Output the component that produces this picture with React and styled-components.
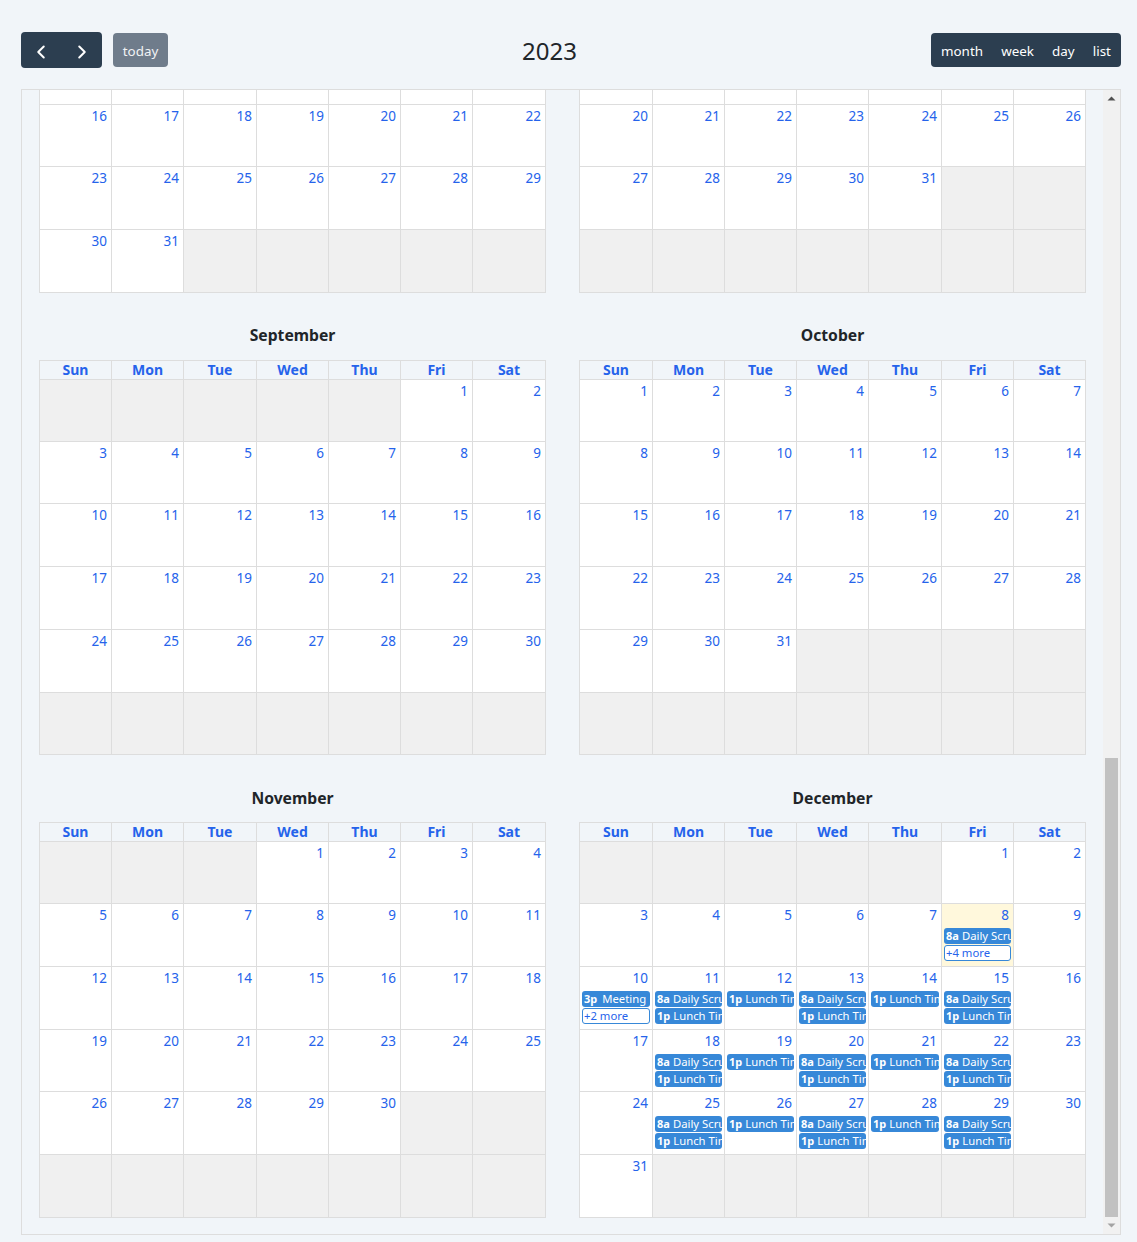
import React from "react";
import styled, { createGlobalStyle } from "styled-components";
import { ChevronLeft, ChevronRight } from "lucide-react";

const Global = createGlobalStyle`
  html, body { margin: 0; padding: 0; background: #f1f5f9; }
  body { font-family: "Noto Sans", "Open Sans", sans-serif; font-size: 14px; color: #212529; }
`;

const Page = styled.div`
  width: 1137px;
  height: 1242px;
  box-sizing: border-box;
  padding: 32px 16px 7px 21px;
  display: flex;
  flex-direction: column;
  overflow: hidden;
`;
const Toolbar = styled.div`
  display: flex;
  justify-content: space-between;
  align-items: center;
  height: 36px;
  margin-bottom: 21px;
`;
const ToolGroup = styled.div`
  display: flex;
  align-items: center;
  gap: 11px;
`;
const NavGroup = styled.div`
  display: flex;
  width: 81px;
  height: 36px;
  background: #2c3e50;
  border-radius: 4px;
`;
const NavButton = styled.button`
  flex: 1;
  border: 0;
  padding: 3px 0 0;
  background: transparent;
  color: #fff;
  display: flex;
  align-items: center;
  justify-content: center;
`;
const TodayButton = styled.button`
  width: 55px;
  height: 34px;
  border: 0;
  padding: 2px 0 0;
  border-radius: 4px;
  background: #6f7c8b;
  color: #f1f3f5;
  font: 13.4px "Noto Sans", sans-serif;
`;
const Title = styled.h2`
  margin: 0;
  padding-top: 2px;
  font-size: 24px;
  font-weight: 400;
  line-height: 34px;
  color: #212529;
`;
const ViewGroup = styled.div`
  display: flex;
  height: 34px;
  width: 190px;
  box-sizing: border-box;
  padding: 0 10px;
  justify-content: space-between;
  align-items: center;
  background: #2c3e50;
  border-radius: 4px;
`;
const ViewButton = styled.button`
  border: 0;
  padding: 2px 0 0;
  background: transparent;
  color: #fff;
  font: 13.4px "Noto Sans", sans-serif;
`;
const Frame = styled.div`
  flex: 1;
  min-height: 0;
  display: flex;
  border: 1px solid #ddd;
  overflow: hidden;
`;
const Months = styled.div`
  flex: 1;
  min-width: 0;
  box-sizing: border-box;
  padding: 0 18px 0 17px;
  display: grid;
  grid-template-columns: 507px 507px;
  column-gap: 33px;
  align-content: start;
`;
const Scrollbar = styled.div`
  width: 17px;
  flex: none;
  background: #f1f1f1;
  display: flex;
  flex-direction: column;
`;
const ScrollArrow = styled.div`
  height: 17px;
  flex: none;
  display: flex;
  align-items: center;
  justify-content: center;
`;
const ScrollGap = styled.div`
  height: 651px;
  flex: none;
`;
const ScrollThumb = styled.div`
  flex: 1;
  margin: 0 2px;
  background: #c1c1c1;
`;
const MonthBox = styled.section`
  min-width: 0;
`;
const MonthTitle = styled.div`
  height: 67px;
  box-sizing: border-box;
  padding-top: ${(p) => p.$pad}px;
  text-align: center;
  font-size: 15.7px;
  line-height: 22px;
  font-weight: 700;
  color: #212529;
`;
const Grid = styled.div`
  display: grid;
  grid-template-columns: ${(p) => p.$cols};
  border-left: 1px solid #ddd;
  border-top: ${(p) => (p.$cropped ? "0" : "1px solid #ddd")};
  width: 507px;
  box-sizing: border-box;
`;
const Head = styled.div`
  height: 18px;
  line-height: 18px;
  border-right: 1px solid #ddd;
  border-bottom: 1px solid #ddd;
  text-align: center;
  font-size: 14px;
  font-weight: 700;
  color: #2563eb;
`;
const Cell = styled.div`
  box-sizing: border-box;
  height: ${(p) => p.$h}px;
  border-right: 1px solid #ddd;
  border-bottom: 1px solid #ddd;
  background: ${(p) => (p.$today ? "#fff8dc" : p.$off ? "#f0f0f0" : "#fff")};
  padding: 0 2px;
  overflow: hidden;
  min-width: 0;
`;
const DayNum = styled.div`
  height: 24px;
  line-height: 23px;
  text-align: right;
  padding-right: 2px;
  font-size: 13.5px;
  color: #2563eb;
`;
const Event = styled.div`
  height: 16px;
  line-height: 15px;
  margin-bottom: 1px;
  background: #3788d8;
  color: #fff;
  border-radius: 3px;
  font-size: 11.3px;
  white-space: nowrap;
  overflow: hidden;
  padding: 0 2px;
`;
const EventTime = styled.b`
  font-size: 11px;
  font-weight: 700;
  margin-right: ${(p) => p.$gap}px;
`;
const More = styled.div`
  height: 16px;
  box-sizing: border-box;
  line-height: 14px;
  border: 1px solid #3788d8;
  border-radius: 3px;
  background: #fff;
  color: #2563eb;
  font-size: 11.3px;
  padding: 0 1px;
  white-space: nowrap;
  overflow: hidden;
`;

const NAMES = ["Sun", "Mon", "Tue", "Wed", "Thu", "Fri", "Sat"];
const LEFT = "72px 72px 73px 72px 72px 72px 73px";
const RIGHT = "73px 72px 72px 72px 73px 72px 72px";
const H1 = [62, 62, 63, 63, 63, 62];
const H2 = [62, 63, 63, 62, 63, 63];

function weeksOf(month) {
  const first = new Date(2023, month, 1).getDay();
  const len = new Date(2023, month + 1, 0).getDate();
  const cells = [];
  for (let i = 0; i < 42; i++) {
    const d = i - first + 1;
    cells.push(d >= 1 && d <= len ? d : null);
  }
  return cells;
}

const SCRUM = ["8a", "Daily Scrum", 3];
const LUNCH = ["1p", "Lunch Time", 3];
const decEvents = {
  8: { list: [SCRUM], more: 4 },
  10: { list: [["3p", "Meeting", 5]], more: 2 },
};
[11, 13, 15, 18, 20, 22, 25, 27, 29].forEach((d) => (decEvents[d] = { list: [SCRUM, LUNCH] }));
[12, 14, 19, 21, 26, 28].forEach((d) => (decEvents[d] = { list: [LUNCH] }));

function Month({ name, pad, month, heights, cols, fromRow, stripH, events = {}, today }) {
  const cells = weeksOf(month);
  const start = fromRow ?? 0;
  return (
    <MonthBox>
      {name && <MonthTitle $pad={pad}>{name}</MonthTitle>}
      <Grid $cols={cols} $cropped={fromRow > 0}>
        {!fromRow && NAMES.map((n) => <Head key={n}>{n}</Head>)}
        {fromRow > 0 && NAMES.map((n) => <Cell key={n} $h={stripH} />)}
        {cells.map((d, i) => {
          const row = Math.floor(i / 7);
          if (row < start) return null;
          const ev = d && events[d];
          return (
            <Cell key={i} $h={heights[row - start]} $off={d === null} $today={d === today}>
              {d && <DayNum>{d}</DayNum>}
              {ev &&
                ev.list.map(([t, label, gap]) => (
                  <Event key={t}>
                    <EventTime $gap={gap}>{t}</EventTime>
                    {label}
                  </Event>
                ))}
              {ev && ev.more && <More>+{ev.more} more</More>}
            </Cell>
          );
        })}
      </Grid>
    </MonthBox>
  );
}

const Tri = ({ d, fill }) => (
  <svg width="9" height="5" viewBox="0 0 9 5">
    <path d={d} fill={fill} />
  </svg>
);

export default function App() {
  return (
    <Page>
      <Global />
      <Toolbar>
        <ToolGroup>
          <NavGroup>
            <NavButton aria-label="prev"><ChevronLeft size={22} strokeWidth={2.2} /></NavButton>
            <NavButton aria-label="next"><ChevronRight size={22} strokeWidth={2.2} /></NavButton>
          </NavGroup>
          <TodayButton>today</TodayButton>
        </ToolGroup>
        <Title>2023</Title>
        <ViewGroup>
          <ViewButton>month</ViewButton>
          <ViewButton>week</ViewButton>
          <ViewButton>day</ViewButton>
          <ViewButton>list</ViewButton>
        </ViewGroup>
      </Toolbar>
      <Frame>
        <Months>
          <Month month={6} cols={LEFT} fromRow={3} stripH={15} heights={[62, 63, 63]} />
          <Month month={7} cols={RIGHT} fromRow={3} stripH={15} heights={[62, 63, 63]} />
          <Month name="September" pad={31} month={8} cols={LEFT} heights={H1} />
          <Month name="October" pad={31} month={9} cols={RIGHT} heights={H1} />
          <Month name="November" pad={32} month={10} cols={LEFT} heights={H2} />
          <Month name="December" pad={32} month={11} cols={RIGHT} heights={H2} events={decEvents} today={8} />
        </Months>
        <Scrollbar>
          <ScrollArrow><Tri d="M4.5 0.5 L8.5 4.5 L0.5 4.5 Z" fill="#505050" /></ScrollArrow>
          <ScrollGap />
          <ScrollThumb />
          <ScrollArrow><Tri d="M0.5 0.5 L8.5 0.5 L4.5 4.5 Z" fill="#a3a3a3" /></ScrollArrow>
        </Scrollbar>
      </Frame>
    </Page>
  );
}
